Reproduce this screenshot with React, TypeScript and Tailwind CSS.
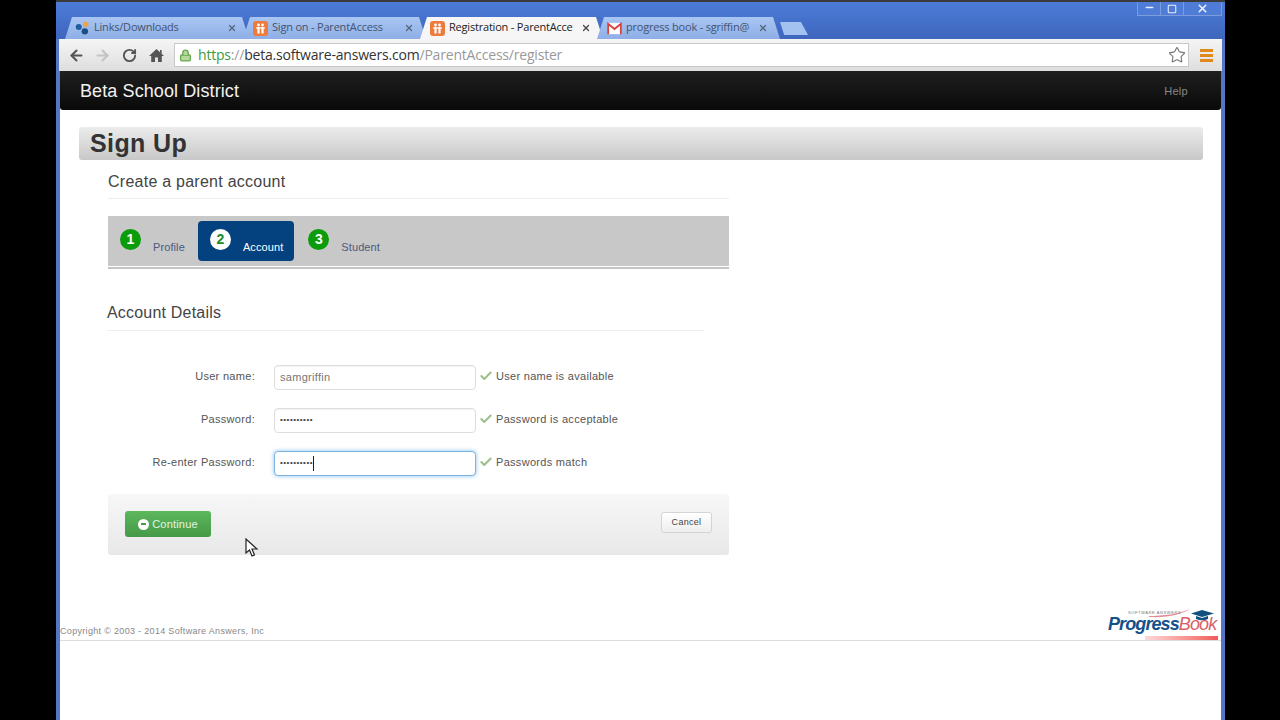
import React from 'react';
import { ArrowLeft, ArrowRight, RotateCw, Lock, Star, X, Minus, Check, Square } from 'lucide-react';

const ParentIcon = () => (
  <div className="w-[15px] h-[15px] rounded-[3px] bg-[#ee7a3c] flex items-center justify-center shrink-0">
    <svg width="11" height="11" viewBox="0 0 11 11" fill="#fff">
      <circle cx="3.5" cy="2" r="1.4" />
      <circle cx="7.5" cy="2" r="1.4" />
      <rect x="2.4" y="4" width="2.2" height="6.5" />
      <rect x="6.4" y="4" width="2.2" height="6.5" />
      <rect x="1" y="4.4" width="9" height="1.2" />
    </svg>
  </div>
);

const LinksIcon = () => (
  <svg width="15" height="15" viewBox="0 0 16 15" className="shrink-0">
    <circle cx="4" cy="6" r="3.2" fill="#1f5f9e" />
    <circle cx="10.5" cy="10.5" r="3.4" fill="#1a4f86" />
    <circle cx="11.5" cy="3" r="2.8" fill="#f0a23c" />
  </svg>
);

const GmailIcon = () => (
  <svg width="15" height="13" viewBox="0 0 16 13" className="shrink-0">
    <rect x="0.5" y="0.5" width="15" height="12" fill="#fff" />
    <path d="M1.2 12.5V1.5L8 7l6.8-5.5v11" fill="none" stroke="#d9403a" strokeWidth="2" />
  </svg>
);

const Tab = ({ icon, title, active, width }: { icon: React.ReactNode; title: string; active?: boolean; width: string }) => (
  <div
    className={`${width} h-[22px] flex items-center pl-[10px] pr-[12px] [clip-path:polygon(0_100%,7px_0,calc(100%-7px)_0,100%_100%)] ${
      active ? 'bg-[#f6f6f6] text-[#222]' : 'bg-gradient-to-b from-[#a9c6f2] to-[#8eaee6] text-[#44536e]'
    }`}
  >
    {icon}
    <span className="flex-1 ml-[4px] pb-[2px] whitespace-nowrap text-[11px] leading-[14px] tracking-[-0.2px]">{title}</span>
    <X size={10} strokeWidth={3} className={active ? 'text-[#444]' : 'text-[#56637c]'} />
  </div>
);

const Step = ({ n, label, active }: { n: number; label: string; active?: boolean }) => (
  <div className={`flex items-start h-[40px] rounded-[4px] ${active ? 'bg-[#04427f] pl-[12px] pr-[11px]' : ''}`}>
    <div
      className={`mt-[8px] w-[21px] h-[21px] rounded-full flex items-center justify-center text-[14px] font-bold shrink-0 ${
        active ? 'bg-white text-[#1a8a2a]' : 'bg-[#0a9c0a] text-white'
      }`}
    >
      {n}
    </div>
    <span className={`ml-[12px] mt-[20px] text-[11px] leading-[13px] tracking-[0.1px] ${active ? 'text-white' : 'text-[#4a5a80]'}`}>{label}</span>
  </div>
);

const FormRow = ({ label, value, msg, focused, small }: { label: string; value: string; msg: string; focused?: boolean; small?: boolean }) => (
  <div className="flex items-center h-[25px]">
    <label className="w-[148px] pb-[2px] text-right text-[11px] tracking-[0.3px] text-[#555]">{label}</label>
    <div
      className={`ml-[19px] w-[202px] h-[25px] rounded-[4px] bg-white flex items-center pl-[5px] border ${
        focused ? 'border-[#7fb4e0] shadow-[0_0_4px_rgba(82,168,236,0.7)]' : 'border-[#dedede] shadow-[inset_0_1px_1px_rgba(0,0,0,0.05)]'
      }`}
    >
      <span className={`pb-[1px] ${small ? 'text-[8px] tracking-[0.5px] text-[#444]' : 'text-[11px] tracking-[0.3px] text-[#777]'}`}>{value}</span>
      {focused && <span className="w-px h-[15px] bg-[#222]" />}
    </div>
    <Check size={14} strokeWidth={3.5} className="ml-[3px] -mt-[3px] text-[#9cc08c]" />
    <span className="ml-[3px] pb-[2px] text-[11px] tracking-[0.3px] text-[#555]">{msg}</span>
  </div>
);

const ProgressBookLogo = () => (
  <div className="relative w-[113px] h-[32px] shrink-0">
    <svg width="113" height="22" viewBox="0 0 113 22" className="absolute left-0 top-0">
      <path d="M40 8 C56 8 70 6 82 1 C74 6 60 10 42 9Z" fill="#e58a94" />
      <path d="M83 5.5 L94 2 L106 5.5 L94 9Z" fill="#12507f" />
      <path d="M88 8 L88 11 Q94 13.5 100 11 L100 8 L94 10Z" fill="#12507f" />
    </svg>
    <span className="absolute left-[20px] top-[2px] text-[4px] leading-[5px] tracking-[0.6px] text-[#777] whitespace-nowrap">SOFTWARE ANSWERS</span>
    <span className="absolute left-0 top-[7px] whitespace-nowrap italic font-bold text-[18px] leading-[18px] tracking-[-0.9px] text-[#14508a]">
      Progress<span className="font-normal text-[#d9606a]">Book</span>
    </span>
    <div className="absolute right-[3px] bottom-0 w-[73px] h-[4px] bg-gradient-to-r from-[#fbd9d9] to-[#ee5a5a]" />
  </div>
);

export default function App() {
  return (
    <div className="w-[1280px] h-[720px] bg-black flex overflow-hidden font-['Liberation_Sans',sans-serif]">
      <div className="w-[56px] shrink-0" />
      <div className="relative w-[1169px] h-full border-x-4 border-[#5576c4] bg-white flex flex-col">
        {/* browser chrome */}
        <div className="-mx-1 h-[39px] bg-gradient-to-b from-[#4b7cd8] to-[#3f66bd] border-t-2 border-[#3b3b3b] relative font-['Open_Sans',sans-serif]">
          <div className="flex pl-[9px] pt-[15px]">
            <Tab width="w-[184px] -mr-[6px]" icon={<LinksIcon />} title="Links/Downloads" />
            <Tab width="w-[183px] -mr-[6px]" icon={<ParentIcon />} title="Sign on - ParentAccess" />
            <Tab width="w-[183px] -mr-[6px]" icon={<ParentIcon />} title="Registration - ParentAcce" active />
            <Tab width="w-[183px]" icon={<GmailIcon />} title="progress book - sgriffin@" />
            <div className="w-[28px] h-[13px] mt-[5px] bg-[#a4c2f0] [clip-path:polygon(0_0,75%_0,100%_100%,15%_100%)]" />
          </div>
          <div className="absolute right-[3px] top-0 h-[14px] flex text-[#e8eefb] border-x border-b border-[#7e9bdc] bg-[#4f7cd6]">
            <div className="w-[23px] flex items-end justify-center pb-[2px] border-r border-[#7e9bdc]"><Minus size={11} strokeWidth={3} /></div>
            <div className="w-[23px] flex items-center justify-center border-r border-[#7e9bdc]"><Square size={10} strokeWidth={2.5} /></div>
            <div className="w-[37px] flex items-center justify-center"><X size={13} strokeWidth={3} /></div>
          </div>
        </div>
        <div className="h-[32px] shrink-0 -mx-px bg-gradient-to-b from-[#f5f5f5] to-[#dedede] flex items-center font-['Open_Sans',sans-serif]">
          <div className="w-[115px] flex items-center pl-[9px] text-[#555]">
            <ArrowLeft size={17} strokeWidth={3} />
            <ArrowRight size={17} strokeWidth={3} className="ml-[9px] text-[#c4c4c4]" />
            <RotateCw size={15} strokeWidth={3} className="ml-[11px]" />
            <svg width="15" height="15" viewBox="0 0 15 15" fill="currentColor" className="ml-[12px]">
              <path d="M7.5 1 L11 4.2 V2 H12.6 V5.7 L15 8 H12.8 V14 H9 V9.5 H6 V14 H2.2 V8 H0 Z" />
            </svg>
          </div>
          <div className="w-[1015px] h-[24px] bg-white border border-[#c8c8c8] flex items-center pl-[4px]">
            <Lock size={13} strokeWidth={2.5} className="text-[#6aa84f] fill-[#b5d99c]" />
            <span className="ml-[6px] pb-[1px] text-[14px] tracking-[-0.2px] whitespace-nowrap">
              <span className="text-[#3d9a3d]">https</span>
              <span className="text-[#a0a0a0]">://</span>
              <span className="text-[#333]">beta.software-answers.com</span>
              <span className="text-[#999]">/ParentAccess/register</span>
            </span>
            <Star size={18} strokeWidth={1.5} className="ml-auto mr-[2px] text-[#777]" />
          </div>
          <div className="ml-[11px] flex flex-col gap-[2px]">
            <div className="w-[13px] h-[3px] bg-[#e08a1e]" />
            <div className="w-[13px] h-[3px] bg-[#e08a1e]" />
            <div className="w-[13px] h-[3px] bg-[#e08a1e]" />
          </div>
        </div>

        {/* nav */}
        <div className="h-[39px] shrink-0 rounded-b-[3px] bg-gradient-to-b from-[#1f1f1f] to-[#0a0a0a] flex items-center justify-between pl-[20px] pr-[33px] pt-[2px]">
          <span className="text-[18px] tracking-[0.1px] text-[#f2f2f2]">Beta School District</span>
          <span className="text-[11px] tracking-[0.3px] text-[#888]">Help</span>
        </div>

        {/* page */}
        <div className="mt-[17px] ml-[19px] mr-[18px] h-[33px] rounded-[3px] bg-gradient-to-b from-[#ececec] to-[#c8c8c8] flex items-center pl-[11px]">
          <h1 className="text-[25px] font-bold tracking-[0.4px] text-[#333]">Sign Up</h1>
        </div>

        <div className="ml-[48px] w-[621px]">
          <div className="h-[39px] border-b border-[#eeeeee] flex items-center pt-[5px]">
            <h2 className="text-[16px] tracking-[0.25px] text-[#444]">Create a parent account</h2>
          </div>

          <div className="mt-[17px] h-[53px] bg-white border-b-2 border-[#c4c4c4]">
            <div className="h-[50px] bg-[#c8c8c8] flex items-start pt-[5px] pl-[12px]">
              <Step n={1} label="Profile" />
              <div className="ml-[13px]"><Step n={2} label="Account" active /></div>
              <div className="ml-[14px]"><Step n={3} label="Student" /></div>
            </div>
          </div>

          <div className="mt-[33px] -ml-px w-[597px] h-[29px] border-b border-[#eeeeee] pt-[1px]">
            <h3 className="text-[16px] tracking-[0.2px] leading-[20px] text-[#444]">Account Details</h3>
          </div>

          <div className="mt-[34px] -ml-[1px] flex flex-col gap-[18px]">
            <FormRow label="User name:" value="samgriffin" msg="User name is available" />
            <FormRow label="Password:" value="••••••••••" msg="Password is acceptable" small />
            <FormRow label="Re-enter Password:" value="••••••••••" msg="Passwords match" small focused />
          </div>

          <div className="mt-[18px] h-[61px] rounded-[3px] bg-gradient-to-b from-[#f7f7f7] to-[#e8e8e8] flex items-start justify-between pl-[17px] pr-[17px] pt-[17px]">
            <button className="w-[86px] h-[26px] rounded-[3px] bg-gradient-to-b from-[#5cb85c] to-[#479947] text-[#e4f4e4] text-[11px] tracking-[0.2px] flex items-center justify-center gap-[3px]">
              <span className="w-[11px] h-[11px] rounded-full bg-white flex items-center justify-center">
                <span className="w-[5px] h-[1.5px] bg-[#479947]" />
              </span>
              Continue
            </button>
            <button className="w-[51px] h-[21px] mt-px rounded-[3px] bg-gradient-to-b from-white to-[#eeeeee] border border-[#d4d4d4] text-[9px] tracking-[0.3px] text-[#444]">
              Cancel
            </button>
          </div>
        </div>

        {/* footer */}
        <div className="mt-[53px] h-[33px] border-b border-[#dcdcdc] flex items-end justify-between">
          <span className="pb-[2px] text-[9px] tracking-[0.32px] text-[#888]">Copyright © 2003 - 2014 Software Answers, Inc</span>
          <ProgressBookLogo />
        </div>

        {/* mouse pointer */}
        <svg width="14" height="20" viewBox="0 0 14 20" className="absolute left-[185px] top-[538px]">
          <path d="M1 1 L1 15 L4.5 12 L7 18 L9.5 17 L7 11 L12 11 Z" fill="#fff" stroke="#222" strokeWidth="1.2" />
        </svg>
      </div>
    </div>
  );
}
